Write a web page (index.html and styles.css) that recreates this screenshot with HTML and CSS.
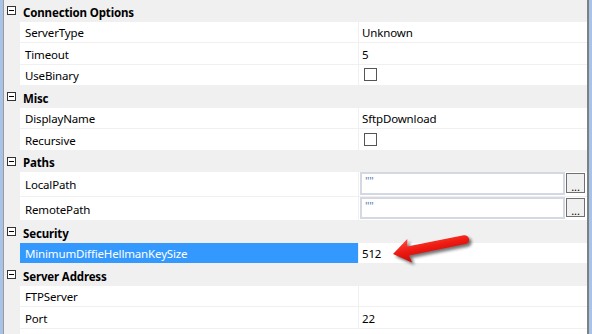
FILE: index.html
```html
<!DOCTYPE html>
<html lang="en">

<head>
    <meta charset="UTF-8">
    <title>Properties</title>
    <link rel="stylesheet" href="styles.css">
</head>

<body>
    <div class="frame">
        <div class="grid">
            <div class="cat"><span class="toggle"></span>Connection Options</div>
            <div class="prop">
                <div class="name">ServerType</div>
                <div class="value">Unknown</div>
            </div>
            <div class="prop">
                <div class="name">Timeout</div>
                <div class="value">5</div>
            </div>
            <div class="prop">
                <div class="name">UseBinary</div>
                <div class="value"><span class="check"></span></div>
            </div>

            <div class="cat"><span class="toggle"></span>Misc</div>
            <div class="prop">
                <div class="name">DisplayName</div>
                <div class="value">SftpDownload</div>
            </div>
            <div class="prop">
                <div class="name">Recursive</div>
                <div class="value"><span class="check"></span></div>
            </div>

            <div class="cat"><span class="toggle"></span>Paths</div>
            <div class="prop tall">
                <div class="name">LocalPath</div>
                <div class="value edit">
                    <div class="textbox">""</div>
                    <div class="dots">...</div>
                </div>
            </div>
            <div class="prop tall">
                <div class="name">RemotePath</div>
                <div class="value edit">
                    <div class="textbox">""</div>
                    <div class="dots">...</div>
                </div>
            </div>

            <div class="cat"><span class="toggle"></span>Security</div>
            <div class="prop selected">
                <div class="name">MinimumDiffieHellmanKeySize</div>
                <div class="value">512</div>
            </div>

            <div class="cat"><span class="toggle"></span>Server Address</div>
            <div class="prop">
                <div class="name">FTPServer</div>
                <div class="value"></div>
            </div>
            <div class="prop">
                <div class="name">Port</div>
                <div class="value">22</div>
            </div>
        </div>
    </div>

    <!-- callout arrow pasted over the screenshot -->
    <svg class="arrow" width="592" height="334" viewBox="0 0 592 334">
        <defs>
            <linearGradient id="red" x1="0" y1="0" x2="0" y2="1">
                <stop offset="0" stop-color="#ff4a3a" />
                <stop offset="0.5" stop-color="#ee1a12" />
                <stop offset="1" stop-color="#c80a08" />
            </linearGradient>
            <filter id="blur" x="-20%" y="-50%" width="140%" height="200%">
                <feGaussianBlur stdDeviation="1.6" />
            </filter>
        </defs>
        <g transform="translate(393 254) rotate(-11.3)">
            <path d="M0 0 L17 -12 L15.5 -4.5 L73 -4.5 A4.5 4.5 0 0 1 73 4.5 L15.5 4.5 L17 12 Z"
                  fill="#000" opacity="0.55" filter="url(#blur)" transform="translate(2 3)" />
            <path d="M0 0 L17 -12 L15.5 -4.5 L73 -4.5 A4.5 4.5 0 0 1 73 4.5 L15.5 4.5 L17 12 Z"
                  fill="url(#red)" />
        </g>
    </svg>
</body>

</html>
```

FILE: styles.css
```css
body {
    margin: 0;
    background: #f0f0f0;
    font-family: "Noto Sans", "DejaVu Sans", sans-serif;
    font-size: 11.5px;
    letter-spacing: -0.15px;
    color: #000;
}

.frame {
    width: 592px;
    height: 334px;
    box-sizing: border-box;
    border-left: 3px solid #a7c3ea;
    border-right: 3px solid #a7c3ea;
}

.grid {
    height: 100%;
    border-left: 1px solid #9a9a9a;
    border-right: 2px solid #808080;
    background: linear-gradient(to right, #f0f0f0 16px, #fff 16px);
}

.cat {
    display: flex;
    align-items: center;
    height: 21.5px;
    box-sizing: border-box;
    padding-top: 3px;
    background: #f0f0f0;
    font-weight: bold;
}

.toggle {
    position: relative;
    width: 9px;
    height: 9px;
    margin: -3px 7px 0 3px;
    box-sizing: border-box;
    border: 1px solid #333;
    background: #fff;
}

.toggle::after {
    content: "";
    position: absolute;
    left: 1px;
    top: 3px;
    width: 5px;
    height: 1px;
    background: #000;
}

.prop {
    display: flex;
    height: 21.5px;
    margin-left: 16px;
    box-sizing: border-box;
    border-bottom: 1px solid #f0f0f0;
    background: #fff;
}

.prop.tall {
    height: 24.5px;
}

.name {
    width: 339px;
    display: flex;
    align-items: center;
    padding: 2px 0 0 5px;
    box-sizing: border-box;
    border-right: 1px solid #f0f0f0;
}

.value {
    flex: 1;
    display: flex;
    align-items: center;
    padding: 2px 0 0 3px;
}

.selected .name {
    background: #3399ff;
    color: #fff;
}

.check {
    width: 13px;
    height: 13px;
    margin: -2px 0 0 2px;
    box-sizing: border-box;
    border: 1px solid #555;
    background: #fff;
}

.value.edit {
    padding: 0 1px 1px 1px;
    align-items: stretch;
    gap: 1px;
}

.textbox {
    width: 205px;
    box-sizing: border-box;
    border: 2px solid #d3d8e2;
    padding: 1px 0 0 3px;
    line-height: 12px;
    font-size: 11px;
    color: #5a7fb0;
}

.dots {
    width: 19px;
    margin: 1px 0 2px 0;
    box-sizing: border-box;
    border: 1px solid #707070;
    background: #f0f0f0;
    font-size: 11px;
    line-height: 11px;
    display: flex;
    align-items: flex-end;
    justify-content: center;
}

.arrow {
    position: absolute;
    left: 0;
    top: 0;
    pointer-events: none;
}
```
